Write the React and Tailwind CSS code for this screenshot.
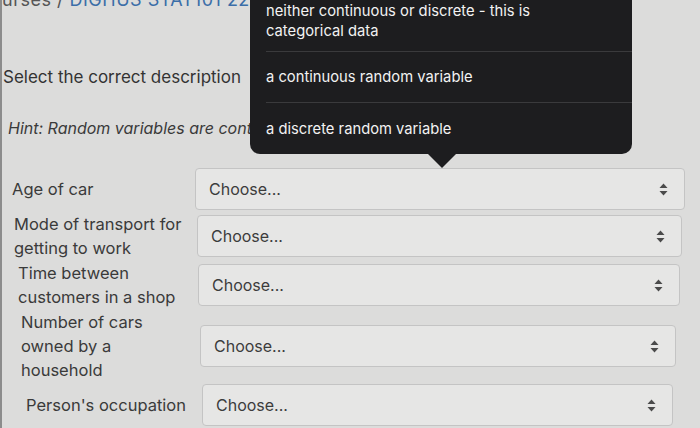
import React from 'react'

const rows = [
  { label: ['Age of car'], h: 'h-[42px]', pl: 'pl-[10px]', sel: 'ml-[0px] w-[490px]', mt: 'mt-0' },
  { label: ['Mode of transport for', 'getting to work'], h: 'h-[48px]', pl: 'pl-[12px]', sel: 'ml-[2px] w-[485px]', mt: 'mt-[2px]' },
  { label: ['Time between', 'customers in a shop'], h: 'h-[50px]', pl: 'pl-[16px]', sel: 'ml-[3px] w-[482px]', mt: 'mt-0' },
  { label: ['Number of cars', 'owned by a', 'household'], h: 'h-[72px]', pl: 'pl-[19px]', sel: 'ml-[5px] w-[476px]', mt: 'mt-0' },
  { label: ["Person's occupation"], h: 'h-[46px]', pl: 'pl-[24px]', sel: 'ml-[7px] w-[471px]', mt: 'mt-0' },
]

function Chevrons() {
  return (
    <svg width="9" height="13" viewBox="0 0 9 13" className="text-[#4a4a4a]">
      <path d="M4.5 0.5 L8.5 5 L0.5 5 Z" fill="currentColor" />
      <path d="M4.5 12.5 L8.5 8 L0.5 8 Z" fill="currentColor" />
    </svg>
  )
}

export default function App() {
  return (
    <div
      className="relative w-[700px] h-[428px] overflow-hidden bg-[#dcdcdb] border-l-2 border-[#8c8c8c] text-[#333]"
      style={{ fontFamily: 'Inter, "Liberation Sans", Arial, sans-serif' }}
    >
      {/* breadcrumb, cut off at top */}
      <div className="-mt-[10px] h-[20px] leading-[20px] text-[18px] whitespace-nowrap tracking-[0.5px]">
        <span className="text-[#555]">urses / </span>
        <span className="text-[#3b6ea8]">DIGHUS STAT101 223</span>
      </div>

      <div className="mt-[55px] h-[24px] leading-[24px] text-[17px] pl-[1px] whitespace-nowrap">
        Select the correct description
      </div>
      <div className="mt-[27px] h-[24px] leading-[24px] text-[16px] italic pl-[6px] whitespace-nowrap text-[#3a3a3a]">
        Hint: Random variables are continuous or discrete
      </div>

      <div className="mt-[28px] flex flex-col">
        {rows.map((r, i) => (
          <div key={i} className={`flex items-center ${r.h} ${r.mt}`}>
            <div className={`w-[193px] shrink-0 ${r.pl} text-[16.5px] leading-[24px] text-[#3a3a3a]`}>
              {r.label.map(l => <div key={l} className="whitespace-nowrap">{l}</div>)}
            </div>
            <div className={`${r.sel} h-[42px] shrink-0 flex items-center justify-between pl-[13px] pr-[16px] bg-[#e6e6e5] border border-[#c4c4c4] rounded-[4px]`}>
              <span className="text-[16px] text-[#3c3c3c]">Choose...</span>
              <Chevrons />
            </div>
          </div>
        ))}
      </div>

      {/* dropdown popover */}
      <div className="absolute left-[248px] top-[-10px] w-[382px]">
        <div className="bg-[#1d1d1f] rounded-b-[10px] pl-[16px] text-[#f2f2f2] text-[14.75px] leading-[20px]">
          <div className="pt-[11px] pb-[10px] border-b border-[#3a3a3c]">
            <div>neither continuous or discrete - this is</div>
            <div>categorical data</div>
          </div>
          <div className="h-[51px] flex items-center border-b border-[#3a3a3c]">a continuous random variable</div>
          <div className="h-[51px] flex items-center">a discrete random variable</div>
        </div>
        <div className="ml-[178px] w-0 h-0 border-l-[14px] border-r-[14px] border-t-[14px] border-l-transparent border-r-transparent border-t-[#1d1d1f]" />
      </div>
    </div>
  )
}
